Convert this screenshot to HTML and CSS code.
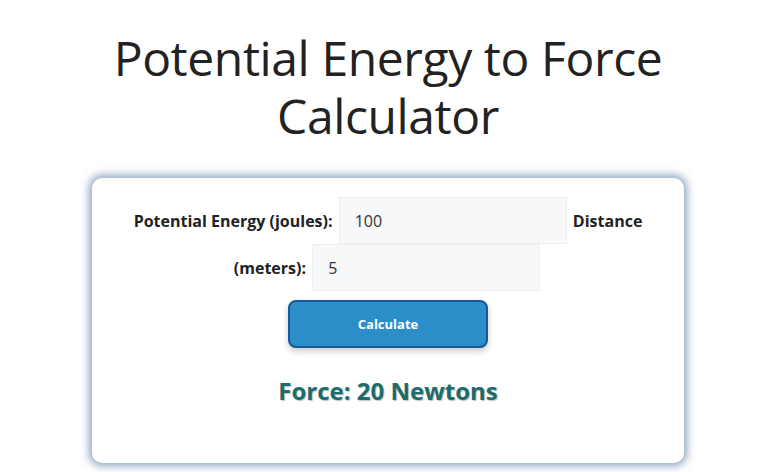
FILE: index.html
```html
<!DOCTYPE html>
<html lang="en">
<head>
<meta charset="utf-8">
<title>Potential Energy to Force Calculator</title>
<link rel="stylesheet" href="styles.css">
</head>
<body>
<main class="page">
  <h1 class="title">Potential Energy to Force Calculator</h1>
  <section class="card">
    <form class="form">
      <label class="label" for="pe">Potential Energy (joules):</label>
      <input class="field" id="pe" type="text" value="100">
      <label class="label" for="dist">Distance (meters):</label>
      <input class="field" id="dist" type="text" value="5">
      <div class="actions"><button class="btn" type="button">Calculate</button></div>
    </form>
    <p class="result">Force: 20 Newtons</p>
  </section>
  <p class="info">The potential energy to force calculator helps you find the force needed to move an object through a distance while it holds potential energy.</p>
</main>
</body>
</html>
```
FILE: styles.css
```css
html, body {
  margin: 0;
  padding: 0;
  background: #ffffff;
}
body {
  font-family: "Open Sans", "Noto Sans", sans-serif;
  color: #222222;
  overflow: hidden;
}
.page {
  width: 592px;
  margin: 0 auto;
  padding: 29px 0 0 11px;
}
.title {
  margin: 0 -40px 33px -40px;
  font-size: 48px;
  line-height: 58px;
  font-weight: 400;
  text-align: center;
  color: #222222;
  letter-spacing: -0.4px;
}
.card {
  background: #ffffff;
  border-radius: 10px;
  box-shadow: 0 0 9px 3px rgba(70, 105, 150, 0.6);
  padding: 19px 40px 0 40px;
  height: 266px;
  box-sizing: content-box;
}
.form {
  text-align: center;
  line-height: 20px;
  font-size: 16px;
}
.label {
  font-weight: 700;
  color: #222222;
  font-size: 16px;
  vertical-align: middle;
}
.field {
  display: inline-block;
  vertical-align: middle;
  box-sizing: border-box;
  width: 228px;
  height: 47px;
  margin: 0 2px;
  padding: 0 15px;
  border: 1px solid #eeeeef;
  background: #f7f8fa;
  font-family: "Open Sans", "Noto Sans", sans-serif;
  font-size: 16px;
  color: #333333;
  outline: none;
}
.actions {
  margin-top: 9px;
}
.btn {
  width: 200px;
  height: 48px;
  background: #2b8ec8;
  border: 2px solid #1559a0;
  border-radius: 8px;
  color: #ffffff;
  font-family: "Open Sans", "Noto Sans", sans-serif;
  font-size: 13px;
  font-weight: 700;
  box-shadow: 0 3px 6px rgba(0, 0, 0, 0.22);
  cursor: pointer;
}
.result {
  margin: 26px 0 0 0;
  text-align: center;
  font-size: 24px;
  font-weight: 700;
  color: #1d6b6b;
  text-shadow: 1px 1px 1px rgba(0, 0, 0, 0.25);
}
.info {
  margin: 5px 0 0 0;
  font-size: 16px;
  line-height: 24px;
  color: #222222;
}
```
